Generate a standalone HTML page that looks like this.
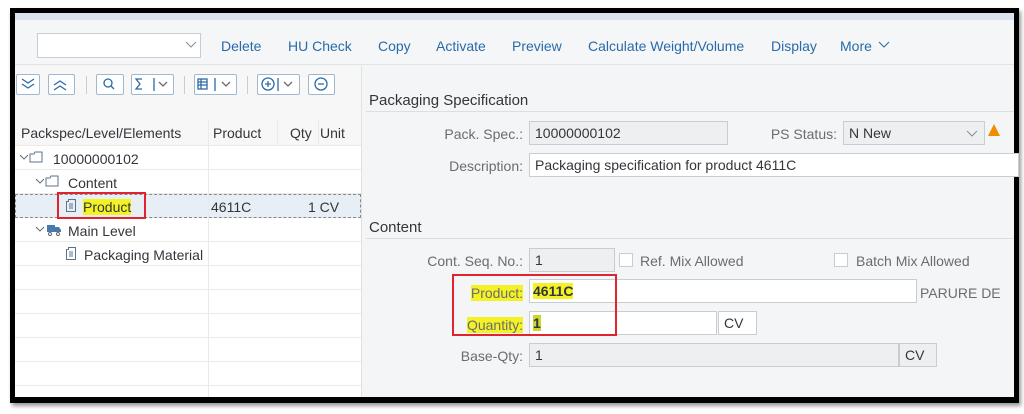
<!DOCTYPE html>
<html><head><meta charset="utf-8"><style>
*{margin:0;padding:0;box-sizing:border-box}
body{width:1024px;height:414px;background:#fff;position:relative;font-family:"Liberation Sans",sans-serif;font-size:14px;color:#32363a;overflow:hidden}
.frame{position:absolute;left:10px;top:8px;width:1009px;height:395px;background:#000;box-shadow:2px 3px 4px #999}
.in{position:absolute;left:15px;top:13px;width:999px;height:384px;background:#f3f5f7;overflow:hidden}
.a{position:absolute;white-space:nowrap}
.tb{color:#2a6aa8;font-size:14px}
.inp{position:absolute;border:1px solid #c9cdd2;background:#fff;height:24px;padding:3px 5px;font-size:14px}
.ro{background:#eeeff1}
.lbl{position:absolute;color:#6a6d70;text-align:right;font-size:14px}
.row{position:absolute;left:0;width:346px;height:24px;border-bottom:1px solid #eceae5}
.btn{position:absolute;height:21px;border:1px solid #9fb8d0;border-radius:2px;background:#fff}
.hl{background:#f4f224}
.cb{position:absolute;width:14px;height:14px;border:1px solid #c9cdd2;background:#fff}
</style></head><body>
<div class="frame"></div>
<div class="in">
 <div class="a" style="left:0;top:0;width:999px;height:7px;background:#d9e4ef"></div>
 <div class="a" style="left:0;top:7px;width:999px;height:45px;background:#f4f6f8;border-bottom:1px solid #e1e3e6"></div>
 <div class="inp" style="left:22px;top:20px;width:164px;height:25px"></div>
 <svg class="a" style="left:170px;top:28px" width="12" height="8"><path d="M1 1l5 5 5-5" stroke="#8a8d90" fill="none"/></svg>
</div>
<div class="a tb" style="left:221px;top:38px">Delete</div>
<div class="a tb" style="left:288px;top:38px">HU Check</div>
<div class="a tb" style="left:378px;top:38px">Copy</div>
<div class="a tb" style="left:436px;top:38px">Activate</div>
<div class="a tb" style="left:512px;top:38px">Preview</div>
<div class="a tb" style="left:588px;top:38px">Calculate Weight/Volume</div>
<div class="a tb" style="left:771px;top:38px">Display</div>
<div class="a tb" style="left:840px;top:38px">More</div>
<svg class="a" style="left:878px;top:41px" width="12" height="8"><path d="M1 1l5 5 5-5" stroke="#2a6aa8" fill="none"/></svg>

<div class="a" style="left:15px;top:66px;width:346px;height:331px;background:#fff"></div>
<div class="a" style="left:15px;top:66px;width:346px;height:54px;background:#f7f7f7"></div>
<div class="btn" style="left:16px;top:74px;width:24px"></div>
<div class="btn" style="left:48px;top:74px;width:27px"></div>
<div class="btn" style="left:96px;top:74px;width:28px"></div>
<div class="btn" style="left:131px;top:74px;width:43px"></div>
<div class="btn" style="left:194px;top:74px;width:43px"></div>
<div class="btn" style="left:257px;top:74px;width:43px"></div>
<div class="btn" style="left:308px;top:74px;width:27px"></div>
<svg class="a" style="left:16px;top:74px" width="320" height="21" fill="none" stroke="#2a6aa8" stroke-width="1.3">
 <path d="M6 5l6 4 6-4M6 10l6 4 6-4"/>
 <path d="M38 11l6-4 6 4M38 16l6-4 6 4"/>
 <circle cx="92" cy="9" r="4"/><path d="M95 12l3 3"/>
 <path d="M126 5h-6l4 5-4 5h6"/><path d="M138 4v13"/><path d="M143 8l4 4 4-4" stroke="#6a6d70"/>
 <rect x="182" y="5" width="9" height="10"/><path d="M182 8h9M182 11h9M185 5v10"/><path d="M199 4v13"/><path d="M206 8l4 4 4-4" stroke="#6a6d70"/>
 <circle cx="252" cy="10" r="6"/><path d="M249 10h6M252 7v6"/><path d="M262 4v13"/><path d="M268 8l4 4 4-4" stroke="#6a6d70"/>
 <circle cx="305" cy="10" r="6"/><path d="M302 10h6"/>
</svg>
<div class="a" style="left:86px;top:76px;width:1px;height:18px;background:#ccc"></div>
<div class="a" style="left:184px;top:76px;width:1px;height:18px;background:#ccc"></div>
<div class="a" style="left:247px;top:76px;width:1px;height:18px;background:#ccc"></div>

<div style="position:absolute;left:15px;top:120px;width:346px;height:277px">
 <div class="row" style="top:0;height:26px;background:#f7f7f7"></div>
 <div class="row" style="top:26px"></div><div class="row" style="top:50px"></div>
 <div class="row" style="top:74px;background:#e8eef5;border:1px dashed #888"></div>
 <div class="row" style="top:98px"></div><div class="row" style="top:122px"></div>
 <div class="row" style="top:146px"></div><div class="row" style="top:170px"></div>
 <div class="row" style="top:194px"></div><div class="row" style="top:218px"></div>
 <div class="row" style="top:242px"></div>
 <div class="a" style="left:193px;top:0;width:1px;height:277px;background:#eceae5"></div>
 <div class="a" style="left:262px;top:0;width:1px;height:26px;background:#eceae5"></div>
 <div class="a" style="left:303px;top:0;width:1px;height:26px;background:#eceae5"></div>
</div>
<div class="a" style="left:21px;top:125px">Packspec/Level/Elements</div>
<div class="a" style="left:213px;top:125px">Product</div>
<div class="a" style="left:290px;top:125px">Qty</div>
<div class="a" style="left:320px;top:125px">Unit</div>
<svg class="a" style="left:18px;top:150px" width="60" height="110" fill="none" stroke="#6a6d70" stroke-width="1">
 <path d="M2 5l4 4 4-4"/><path d="M12 4h4l1-2h7v10h-12z" stroke="#5b738b"/>
 <path d="M18 29l4 4 4-4"/><path d="M28 28h4l1-2h7v10h-12z" stroke="#5b738b"/>
 <path d="M18 77l4 4 4-4"/><rect x="29" y="75" width="8" height="7" fill="#4a79b0" stroke="none"/><path d="M37 77h4l2 3v2h-6z" fill="#4a79b0" stroke="none"/><circle cx="32" cy="84" r="1.5"/><circle cx="40" cy="84" r="1.5"/>
</svg>
<div class="a" style="left:53px;top:151px">10000000102</div>
<div class="a" style="left:68px;top:175px">Content</div>
<div class="a" style="left:57px;top:192px;width:89px;height:27px;border:2px solid #e0232e"></div>
<svg class="a" style="left:65px;top:198px" width="12" height="15" fill="none" stroke="#5b738b"><path d="M1.5 3.5h2v-2h7v12h-9z"/><path d="M4 6h4M4 8h4M4 10h4"/></svg>
<div class="a" style="left:83px;top:199px"><span class="hl">Product</span></div>
<div class="a" style="left:211px;top:199px">4611C</div>
<div class="a" style="left:308px;top:199px">1 CV</div>
<div class="a" style="left:68px;top:223px">Main Level</div>
<svg class="a" style="left:65px;top:246px" width="12" height="15" fill="none" stroke="#5b738b"><path d="M1.5 3.5h2v-2h7v12h-9z"/><path d="M4 6h4M4 8h4M4 10h4"/></svg>
<div class="a" style="left:84px;top:247px">Packaging Material</div>
<div class="a" style="left:361px;top:66px;width:1px;height:331px;background:#dfe1e3"></div>

<div class="a" style="left:369px;top:92px;font-size:15px">Packaging Specification</div>
<div class="a" style="left:366px;top:111px;width:648px;height:1px;background:#dcdee0"></div>
<div class="lbl" style="left:400px;top:126px;width:123px">Pack. Spec.:</div>
<div class="inp ro" style="left:529px;top:121px;width:199px">10000000102</div>
<div class="lbl" style="left:700px;top:126px;width:137px">PS Status:</div>
<div class="inp ro" style="left:843px;top:121px;width:142px">N New</div>
<svg class="a" style="left:966px;top:130px" width="12" height="8"><path d="M1 1l5 5 5-5" stroke="#8a8d90" fill="none"/></svg>
<svg class="a" style="left:987px;top:123px" width="14" height="14"><path d="M7 1L13 13H1Z" fill="#f08c00"/></svg>
<div class="lbl" style="left:400px;top:158px;width:123px">Description:</div>
<div class="inp" style="left:529px;top:153px;width:490px">Packaging specification for product 4611C</div>
<div class="a" style="left:369px;top:219px;font-size:15px">Content</div>
<div class="a" style="left:366px;top:238px;width:648px;height:1px;background:#dcdee0"></div>
<div class="lbl" style="left:400px;top:253px;width:123px">Cont. Seq. No.:</div>
<div class="inp ro" style="left:529px;top:248px;width:86px">1</div>
<div class="cb" style="left:619px;top:253px"></div>
<div class="a" style="left:640px;top:253px;color:#6a6d70">Ref. Mix Allowed</div>
<div class="cb" style="left:834px;top:253px"></div>
<div class="a" style="left:856px;top:253px;color:#6a6d70">Batch Mix Allowed</div>
<div class="lbl" style="left:400px;top:285px;width:123px;color:#6a6d70"><span class="hl">Product:</span></div>
<div class="inp" style="left:529px;top:279px;width:388px;font-weight:bold;padding-left:3px"><span class="hl">4611C</span></div>
<div class="a" style="left:920px;top:285px;color:#6a6d70">PARURE DE</div>
<div class="lbl" style="left:400px;top:317px;width:123px;color:#6a6d70"><span class="hl">Quantity:</span></div>
<div class="inp" style="left:529px;top:311px;width:188px;font-weight:bold;padding-left:3px"><span class="hl" style="background:#c9d82a">1</span></div>
<div class="inp" style="left:718px;top:311px;width:39px">CV</div>
<div class="a" style="left:452px;top:274px;width:165px;height:62px;border:2px solid #e0232e"></div>
<div class="lbl" style="left:400px;top:348px;width:123px">Base-Qty:</div>
<div class="inp ro" style="left:529px;top:343px;width:370px">1</div>
<div class="inp ro" style="left:899px;top:343px;width:38px">CV</div>
</body></html>
